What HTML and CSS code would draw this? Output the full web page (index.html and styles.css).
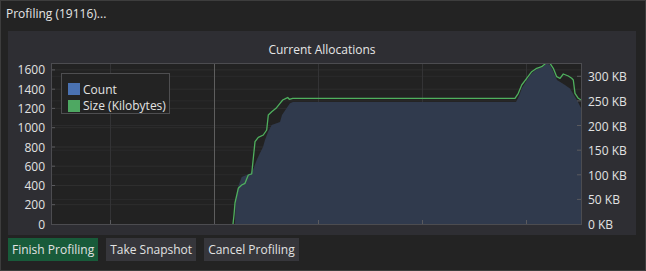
FILE: index.html
```html
<!DOCTYPE html>
<html lang="en">
<head>
  <meta charset="UTF-8">
  <title>Profiling</title>
  <link rel="stylesheet" href="styles.css">
</head>
<body>
  <div class="window">
    <div class="windowTitle">Profiling (19116)...</div>

    <!-- chart panel -->
    <div class="panel">
      <div class="panelTitle">Current Allocations</div>
      <div class="chart">
        <svg class="chartSvg" width="628" height="177" viewBox="8 58 628 177">
          <defs>
            <clipPath id="plotClip"><rect x="51" y="63" width="530" height="161"/></clipPath>
          </defs>
          <rect class="plotBg" x="51" y="63" width="530" height="161"/>

          <!-- grid: left axis -->
          <g class="grid">
            <line x1="51" x2="581" y1="69.9" y2="69.9"/>
            <line x1="51" x2="581" y1="89.2" y2="89.2"/>
            <line x1="51" x2="581" y1="108.4" y2="108.4"/>
            <line x1="51" x2="581" y1="127.7" y2="127.7"/>
            <line x1="51" x2="581" y1="147" y2="147"/>
            <line x1="51" x2="581" y1="166.2" y2="166.2"/>
            <line x1="51" x2="581" y1="185.5" y2="185.5"/>
            <line x1="51" x2="581" y1="204.7" y2="204.7"/>
          </g>
          <!-- grid: right axis -->
          <g class="grid gridAlt">
            <line x1="51" x2="581" y1="76.3" y2="76.3"/>
            <line x1="51" x2="581" y1="100.9" y2="100.9"/>
            <line x1="51" x2="581" y1="125.5" y2="125.5"/>
            <line x1="51" x2="581" y1="150.2" y2="150.2"/>
            <line x1="51" x2="581" y1="174.8" y2="174.8"/>
            <line x1="51" x2="581" y1="199.4" y2="199.4"/>
          </g>
          <g class="grid gridV">
            <line x1="110.5" x2="110.5" y1="63" y2="224"/>
            <line x1="318.5" x2="318.5" y1="63" y2="224"/>
            <line x1="422.5" x2="422.5" y1="63" y2="224"/>
            <line x1="526.5" x2="526.5" y1="63" y2="224"/>
          </g>

          <g clip-path="url(#plotClip)">
            <polygon class="countArea" points="235,224 235.5,205 238,187 241.7,177 250,173.5 253,170 256.7,160 260,153 263,147 265,140 268,132 271.7,125 280,122 282,115 286.7,108 290,103.3 293,102 516,102 519,96 522,88 527,80 532,73 537,69 542,67.5 545,65 547,63.5 550,65 553,71 557,80 565,85 570,88.5 575,97 578,102 581,108 581,224"/>
            <polyline class="sizeLine" points="233,224 234,215 235,203 238.3,188.3 241.7,185 245,183.3 248.3,175 251.7,174 255,141.7 258.3,137.3 263.3,135 266.7,130 268.3,115 271.7,111.7 276,108.3 280,103.3 282.7,100 286,98.3 287.7,97.5 289.3,99.3 292.7,98.3 515,98.3 518.3,93.3 521.7,85 526.7,78.3 531.7,71.7 536.7,68.3 541.7,66.7 545,64 546.7,62.7 550,63.3 553.3,68.3 556.7,76.7 560,78.3 563.3,74 568.3,76 571.7,78.3 573.3,80 575,93.3 578.3,98.3 581,100"/>
          </g>

          <!-- current time marker -->
          <line class="marker" x1="214.5" x2="214.5" y1="63" y2="224"/>

          <!-- ticks -->
          <g class="ticks">
            <line x1="51" x2="55" y1="69.9" y2="69.9"/>
            <line x1="51" x2="55" y1="89.2" y2="89.2"/>
            <line x1="51" x2="55" y1="108.4" y2="108.4"/>
            <line x1="51" x2="55" y1="127.7" y2="127.7"/>
            <line x1="51" x2="55" y1="147" y2="147"/>
            <line x1="51" x2="55" y1="166.2" y2="166.2"/>
            <line x1="51" x2="55" y1="185.5" y2="185.5"/>
            <line x1="51" x2="55" y1="204.7" y2="204.7"/>
            <line x1="577" x2="581" y1="76.3" y2="76.3"/>
            <line x1="577" x2="581" y1="100.9" y2="100.9"/>
            <line x1="577" x2="581" y1="125.5" y2="125.5"/>
            <line x1="577" x2="581" y1="150.2" y2="150.2"/>
            <line x1="577" x2="581" y1="174.8" y2="174.8"/>
            <line x1="577" x2="581" y1="199.4" y2="199.4"/>
            <line x1="110.5" x2="110.5" y1="220" y2="224"/>
            <line x1="214.5" x2="214.5" y1="220" y2="224"/>
            <line x1="318.5" x2="318.5" y1="220" y2="224"/>
            <line x1="422.5" x2="422.5" y1="220" y2="224"/>
            <line x1="526.5" x2="526.5" y1="220" y2="224"/>
          </g>

          <rect class="plotBorder" x="51.5" y="63.5" width="530" height="161"/>

          <!-- axis labels -->
          <g class="axisLabels leftAxis">
            <text x="45" y="74.4">1600</text>
            <text x="45" y="93.7">1400</text>
            <text x="45" y="112.9">1200</text>
            <text x="45" y="132.2">1000</text>
            <text x="45" y="151.5">800</text>
            <text x="45" y="170.7">600</text>
            <text x="45" y="190">400</text>
            <text x="45" y="209.2">200</text>
            <text x="45" y="229">0</text>
          </g>
          <g class="axisLabels rightAxis">
            <text x="588" y="81.3">300 KB</text>
            <text x="588" y="105.9">250 KB</text>
            <text x="588" y="130.5">200 KB</text>
            <text x="588" y="155.2">150 KB</text>
            <text x="588" y="179.8">100 KB</text>
            <text x="588" y="204.4">50 KB</text>
            <text x="588" y="229">0 KB</text>
          </g>
        </svg>

        <!-- legend -->
        <div class="legend">
          <div class="legendRow"><span class="swatch swatchCount"></span>Count</div>
          <div class="legendRow"><span class="swatch swatchSize"></span>Size (Kilobytes)</div>
        </div>
      </div>
    </div>

    <!-- buttons -->
    <div class="buttonRow">
      <button class="btn btnPrimary">Finish Profiling</button>
      <button class="btn">Take Snapshot</button>
      <button class="btn">Cancel Profiling</button>
    </div>
  </div>
</body>
</html>
```

FILE: styles.css
```css
/* base */
html, body {
  margin: 0;
  padding: 0;
  background: #232323;
}

body {
  font-family: "Open Sans", "Noto Sans", sans-serif;
  color: #e2e2e2;
}

/* window frame */
.window {
  width: 646px;
  height: 271px;
  box-sizing: border-box;
  border: 1px solid #3d3d3d;
  background: #232323;
}

.windowTitle {
  height: 30px;
  padding-left: 5px;
  font-size: 12px;
  line-height: 25px;
  color: #e6e6e6;
}

/* chart panel */
.panel {
  margin-left: 7px;
  width: 628px;
  height: 204px;
  background: #2e2e33;
}

.panelTitle {
  height: 27px;
  text-align: center;
  font-size: 12px;
  line-height: 38px;
  color: #e6e6e6;
}

.chart {
  position: relative;
  height: 177px;
}

.chartSvg {
  display: block;
}

.plotBg {
  fill: #222222;
}

.grid line {
  stroke: #2e2e2e;
  stroke-width: 1;
}

.gridAlt line {
  stroke: #2b2b2c;
}

.gridV line {
  stroke: #333335;
}

.countArea {
  fill: #303a4d;
}

.sizeLine {
  fill: none;
  stroke: #4fb05e;
  stroke-width: 1.3;
  stroke-linejoin: round;
}

.marker {
  stroke: #5e5e5e;
  stroke-width: 1;
}

.ticks line {
  stroke: #5a5a5e;
  stroke-width: 1;
}

.plotBorder {
  fill: none;
  stroke: #4c4c50;
  stroke-width: 1;
}

.axisLabels text {
  font-family: "Open Sans", "Noto Sans", sans-serif;
  font-size: 12px;
  fill: #e2e2e2;
}

.leftAxis text {
  text-anchor: end;
}

/* legend overlay */
.legend {
  position: absolute;
  left: 53px;
  top: 15px;
  width: 109px;
  height: 41px;
  padding: 7px 0 0 6px;
  box-sizing: border-box;
  border: 1px solid #4e4e50;
  background: #232323;
  font-size: 12px;
}

.legendRow {
  display: flex;
  align-items: center;
  height: 16.5px;
}

.swatch {
  width: 12px;
  height: 12px;
  margin-right: 3px;
}

.swatchCount {
  background: #4a72b2;
}

.swatchSize {
  background: #4ea862;
}

/* bottom buttons */
.buttonRow {
  display: flex;
  gap: 8px;
  margin: 3px 0 0 7px;
}

.btn {
  height: 23px;
  padding: 0 4px;
  border: none;
  background: #36363b;
  color: #e2e2e2;
  font-family: "Open Sans", "Noto Sans", sans-serif;
  font-size: 12px;
}

.btnPrimary {
  background: #185b3a;
}
```
